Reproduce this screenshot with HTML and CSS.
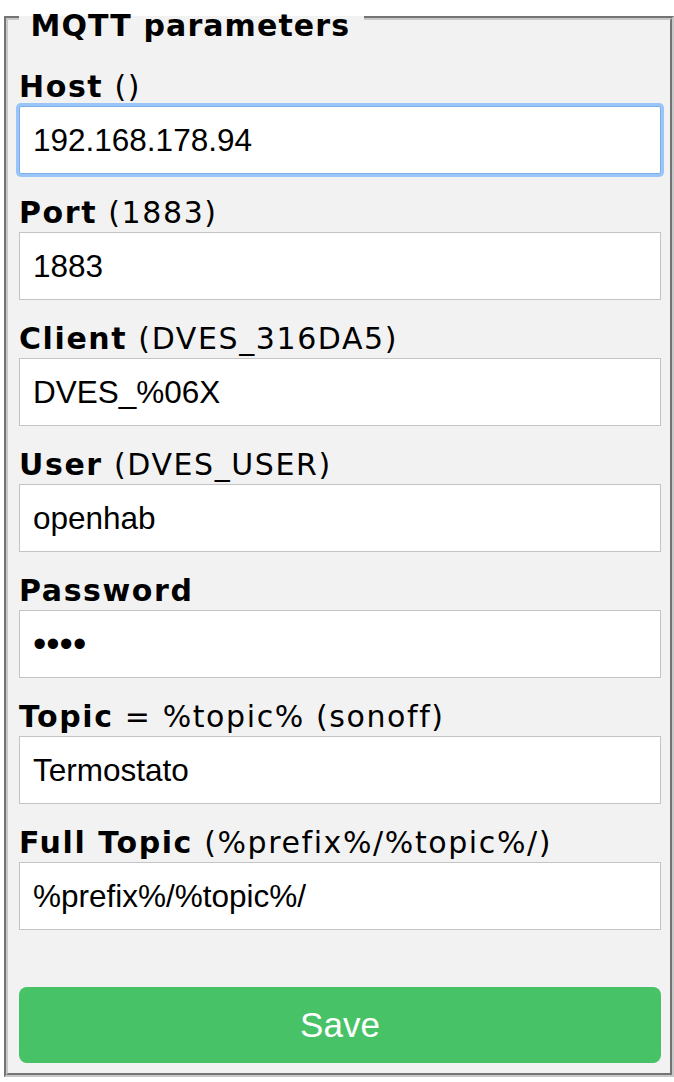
FILE: index.html
```html
<!DOCTYPE html>
<html lang="en">
<head>
    <meta charset="UTF-8">
    <meta name="viewport" content="width=device-width, initial-scale=1.0">
    <title>MQTT parameters</title>
    <link rel="stylesheet" href="styles.css">
</head>
<body>
    <fieldset class="box">
        <legend><b>&nbsp;MQTT parameters&nbsp;</b></legend>
        <form id="mqtt-form">
            <div class="field">
                <label for="mh"><b>Host</b> ()</label>
                <input id="mh" class="focus" value="192.168.178.94">
            </div>
            <div class="field">
                <label for="ml"><b>Port</b> (1883)</label>
                <input id="ml" value="1883">
            </div>
            <div class="field">
                <label for="mc"><b>Client</b> (DVES_316DA5)</label>
                <input id="mc" value="DVES_%06X">
            </div>
            <div class="field">
                <label for="mu"><b>User</b> (DVES_USER)</label>
                <input id="mu" value="openhab">
            </div>
            <div class="field">
                <label for="mp"><b>Password</b></label>
                <input id="mp" class="pass" type="password" value="abcd">
            </div>
            <div class="field">
                <label for="mt"><b>Topic</b> = %topic% (sonoff)</label>
                <input id="mt" value="Termostato">
            </div>
            <div class="field">
                <label for="mf"><b>Full Topic</b> (%prefix%/%topic%/)</label>
                <input id="mf" value="%prefix%/%topic%/">
            </div>
            <button type="submit">Save</button>
        </form>
    </fieldset>
</body>
</html>
```

FILE: styles.css
```css
body {
    margin: 0;
    background: #fff;
    color: #000;
    font-family: 'DejaVu Sans', Verdana, sans-serif;
}
.box {
    margin: -7px 0 0 4px;
    padding: 27px 9px 10px 11px;
    border: 4px groove #c8c8c8;
    background: #f2f2f2;
    min-width: 0;
}
legend {
    padding: 16px 2px 0 0;
    font-size: 30px;
    line-height: 34px;
    letter-spacing: 1.1px;
}
.field {
    margin-bottom: 22px;
}
label {
    display: block;
    font-size: 30px;
    line-height: 34px;
    letter-spacing: 1.6px;
    margin-bottom: 2px;
    white-space: nowrap;
}
input {
    display: block;
    width: 100%;
    height: 68px;
    box-sizing: border-box;
    margin: 0;
    padding: 0 13px;
    border: 1px solid #c4c4c4;
    background: #fff;
    color: #000;
    font-family: 'Liberation Sans', Arial, sans-serif;
    font-size: 31.5px;
    outline: none;
}
input.focus {
    border-color: #7eaee6;
    border-radius: 2px;
    box-shadow: 0 0 0 3px #99c5f8;
}
input.pass {
    font-size: 38px;
}
button {
    display: block;
    width: 100%;
    height: 76px;
    margin-top: 57px;
    border: none;
    border-radius: 8px;
    background: #47c266;
    color: #fff;
    font-family: 'Liberation Sans', Arial, sans-serif;
    font-size: 35px;
    cursor: pointer;
}
```
